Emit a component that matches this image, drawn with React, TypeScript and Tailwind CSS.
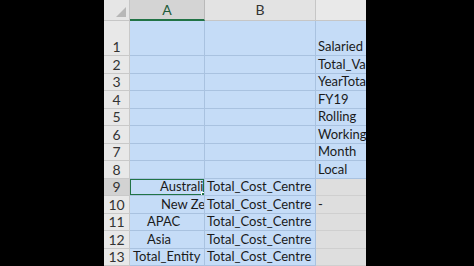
import type { ReactNode } from "react";

type Row = {
  n: number;
  h: string;
  a?: string;
  aIndent?: string;
  b?: string;
  c?: string;
};

const rows: Row[] = [
  { n: 1, h: "h-[35px]", c: "Salaried" },
  { n: 2, h: "h-[18px]", c: "Total_Va" },
  { n: 3, h: "h-[17px]", c: "YearTota" },
  { n: 4, h: "h-[18px]", c: "FY19" },
  { n: 5, h: "h-[17px]", c: "Rolling" },
  { n: 6, h: "h-[18px]", c: "Working" },
  { n: 7, h: "h-[17px]", c: "Month" },
  { n: 8, h: "h-[18px]", c: "Local" },
  { n: 9, h: "h-[17px]", a: "Australia", aIndent: "pl-[30px]", b: "Total_Cost_Centre" },
  { n: 10, h: "h-[18px]", a: "New Zealand", aIndent: "pl-[31px]", b: "Total_Cost_Centre", c: "-" },
  { n: 11, h: "h-[17px]", a: "APAC", aIndent: "pl-[17px]", b: "Total_Cost_Centre" },
  { n: 12, h: "h-[18px]", a: "Asia", aIndent: "pl-[17px]", b: "Total_Cost_Centre" },
  { n: 13, h: "h-[17px]", a: "Total_Entity", aIndent: "pl-[3px]", b: "Total_Cost_Centre" },
];

function Cell({ className, children }: { className: string; children?: ReactNode }) {
  return (
    <div
      className={`relative flex items-end overflow-hidden whitespace-nowrap border-r border-b pb-[1px] leading-[15px] ${className}`}
    >
      {children}
    </div>
  );
}

export default function App() {
  return (
    <div
      className="flex h-[266px] w-[474px] overflow-hidden bg-black text-[13px] text-[#1a1a1a]"
      style={{ fontFamily: "Lato, 'Open Sans', sans-serif" }}
    >
      <div className="w-[104px] shrink-0" />

      <div className="flex w-[262px] shrink-0 flex-col bg-white">
        {/* column headers */}
        <div className="flex h-[21px] shrink-0 text-[14px] leading-none">
          <div className="relative w-[26px] shrink-0 border-r border-b border-[#c6c6c6] bg-[#e6e6e6]">
            <svg className="absolute right-[3px] bottom-[3px]" width="10" height="10" viewBox="0 0 10 10">
              <path d="M10 0 L10 10 L0 10 Z" fill="#b7b7b7" />
            </svg>
          </div>
          <div className="flex w-[75px] shrink-0 items-center justify-center border-r border-b-2 border-r-[#b9b9b9] border-b-[#217346] bg-[#d4d4d4] text-[#1d5c3a]">
            A
          </div>
          <div className="flex w-[111px] shrink-0 items-center justify-center border-r border-b border-[#c6c6c6] bg-[#e3e3e3] text-[#333]">
            B
          </div>
          <div className="w-[50px] shrink-0 border-b border-[#c6c6c6] bg-[#e9e9e9]" />
        </div>

        {rows.map((r) => {
          const active = r.n === 9;
          const cBlue = r.n <= 8;
          return (
            <div key={r.n} className={`flex shrink-0 ${r.h}`}>
              <Cell
                className={`w-[26px] shrink-0 justify-center border-[#c9c9c9] text-[14px] text-[#333] ${
                  active ? "bg-[#d2d2d2]" : "bg-[#e8e8e8]"
                }`}
              >
                {r.n}
              </Cell>
              <Cell className={`w-[75px] shrink-0 border-[#a9c2e0] bg-[#c5dcf7] ${r.aIndent ?? ""}`}>
                {r.a}
                {active && (
                  <>
                    <div className="absolute inset-[-1px] border-2 border-[#217346]" />
                    <div className="absolute right-[-3px] bottom-[-3px] h-[6px] w-[6px] border border-white bg-[#217346]" />
                  </>
                )}
              </Cell>
              <Cell className="w-[111px] shrink-0 border-[#a9c2e0] bg-[#c5dcf7] pl-[2px]">{r.b}</Cell>
              <Cell
                className={`w-[50px] shrink-0 border-r-0 pl-[2px] ${
                  cBlue ? "border-[#a9c2e0] bg-[#c5dcf7]" : "border-[#cfcfcf] bg-[#dedede]"
                }`}
              >
                {r.c}
              </Cell>
            </div>
          );
        })}
      </div>

      <div className="flex-1" />
    </div>
  );
}
